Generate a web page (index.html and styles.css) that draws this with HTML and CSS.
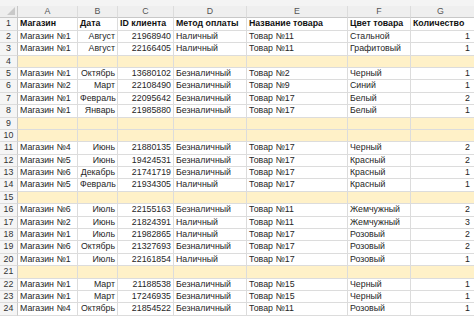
FILE: index.html
```html
<!DOCTYPE html>
<html lang="ru">
<head>
<meta charset="utf-8">
<link rel="stylesheet" href="styles.css">
</head>
<body>
<div class="topstrip"></div>
<div class="sheet">
  <div class="corner"><span class="tri"></span></div>
  <div class="ch">A</div><div class="ch">B</div><div class="ch">C</div><div class="ch">D</div><div class="ch">E</div><div class="ch">F</div><div class="ch">G</div>

  <div class="rh">1</div><div class="c b">Магазин</div><div class="c b">Дата</div><div class="c b">ID клиента</div><div class="c b">Метод оплаты</div><div class="c b">Название товара</div><div class="c b">Цвет товара</div><div class="c b">Количество</div>
  <div class="rh">2</div><div class="c">Магазин №1</div><div class="c r">Август</div><div class="c r">21968940</div><div class="c">Наличный</div><div class="c">Товар №11</div><div class="c">Стальной</div><div class="c r">1</div>
  <div class="rh">3</div><div class="c">Магазин №1</div><div class="c r">Август</div><div class="c r">22166405</div><div class="c">Наличный</div><div class="c">Товар №11</div><div class="c">Графитовый</div><div class="c r">1</div>
  <div class="rh">4</div><div class="c y"></div><div class="c y"></div><div class="c y"></div><div class="c y"></div><div class="c y"></div><div class="c y"></div><div class="c y"></div>
  <div class="rh">5</div><div class="c">Магазин №1</div><div class="c r">Октябрь</div><div class="c r">13680102</div><div class="c">Безналичный</div><div class="c">Товар №2</div><div class="c">Черный</div><div class="c r">1</div>
  <div class="rh">6</div><div class="c">Магазин №2</div><div class="c r">Март</div><div class="c r">22108490</div><div class="c">Безналичный</div><div class="c">Товар №9</div><div class="c">Синий</div><div class="c r">1</div>
  <div class="rh">7</div><div class="c">Магазин №1</div><div class="c r">Февраль</div><div class="c r">22095642</div><div class="c">Безналичный</div><div class="c">Товар №17</div><div class="c">Белый</div><div class="c r">2</div>
  <div class="rh">8</div><div class="c">Магазин №1</div><div class="c r">Январь</div><div class="c r">21985880</div><div class="c">Безналичный</div><div class="c">Товар №17</div><div class="c">Белый</div><div class="c r">1</div>
  <div class="rh">9</div><div class="c y"></div><div class="c y"></div><div class="c y"></div><div class="c y"></div><div class="c y"></div><div class="c y"></div><div class="c y"></div>
  <div class="rh">10</div><div class="c y"></div><div class="c y"></div><div class="c y"></div><div class="c y"></div><div class="c y"></div><div class="c y"></div><div class="c y"></div>
  <div class="rh">11</div><div class="c">Магазин №4</div><div class="c r">Июнь</div><div class="c r">21880135</div><div class="c">Безналичный</div><div class="c">Товар №17</div><div class="c">Черный</div><div class="c r">2</div>
  <div class="rh">12</div><div class="c">Магазин №5</div><div class="c r">Июнь</div><div class="c r">19424531</div><div class="c">Безналичный</div><div class="c">Товар №17</div><div class="c">Красный</div><div class="c r">2</div>
  <div class="rh">13</div><div class="c">Магазин №6</div><div class="c r">Декабрь</div><div class="c r">21741719</div><div class="c">Безналичный</div><div class="c">Товар №17</div><div class="c">Красный</div><div class="c r">1</div>
  <div class="rh">14</div><div class="c">Магазин №5</div><div class="c r">Февраль</div><div class="c r">21934305</div><div class="c">Наличный</div><div class="c">Товар №17</div><div class="c">Красный</div><div class="c r">1</div>
  <div class="rh">15</div><div class="c y"></div><div class="c y"></div><div class="c y"></div><div class="c y"></div><div class="c y"></div><div class="c y"></div><div class="c y"></div>
  <div class="rh">16</div><div class="c">Магазин №6</div><div class="c r">Июль</div><div class="c r">22155163</div><div class="c">Безналичный</div><div class="c">Товар №11</div><div class="c">Жемчужный</div><div class="c r">2</div>
  <div class="rh">17</div><div class="c">Магазин №2</div><div class="c r">Июнь</div><div class="c r">21824391</div><div class="c">Наличный</div><div class="c">Товар №11</div><div class="c">Жемчужный</div><div class="c r">3</div>
  <div class="rh">18</div><div class="c">Магазин №1</div><div class="c r">Июль</div><div class="c r">21982865</div><div class="c">Наличный</div><div class="c">Товар №17</div><div class="c">Розовый</div><div class="c r">2</div>
  <div class="rh">19</div><div class="c">Магазин №6</div><div class="c r">Октябрь</div><div class="c r">21327693</div><div class="c">Безналичный</div><div class="c">Товар №17</div><div class="c">Розовый</div><div class="c r">2</div>
  <div class="rh">20</div><div class="c">Магазин №1</div><div class="c r">Июль</div><div class="c r">22161854</div><div class="c">Наличный</div><div class="c">Товар №17</div><div class="c">Розовый</div><div class="c r">1</div>
  <div class="rh">21</div><div class="c y"></div><div class="c y"></div><div class="c y"></div><div class="c y"></div><div class="c y"></div><div class="c y"></div><div class="c y"></div>
  <div class="rh">22</div><div class="c">Магазин №1</div><div class="c r">Март</div><div class="c r">21188538</div><div class="c">Безналичный</div><div class="c">Товар №15</div><div class="c">Черный</div><div class="c r">1</div>
  <div class="rh">23</div><div class="c">Магазин №1</div><div class="c r">Март</div><div class="c r">17246935</div><div class="c">Безналичный</div><div class="c">Товар №15</div><div class="c">Черный</div><div class="c r">1</div>
  <div class="rh">24</div><div class="c">Магазин №4</div><div class="c r">Октябрь</div><div class="c r">21854522</div><div class="c">Безналичный</div><div class="c">Товар №11</div><div class="c">Розовый</div><div class="c r">1</div>
</div>
</body>
</html>
```
FILE: styles.css
```css
html, body {
  margin: 0;
  padding: 0;
  background: #ffffff;
  overflow: hidden;
  width: 474px;
  height: 316px;
}
body {
  font-family: "Liberation Sans", Arial, sans-serif;
  font-size: 8.8px;
  color: #262626;
}
.topstrip {
  height: 6px;
  background: #f4f4f4;
}
.sheet {
  display: grid;
  grid-template-columns: 18px 60px 40px 56px 73px 101px 63px 70px;
  grid-auto-rows: 12.4px;
  width: 481px;
}
.sheet > div {
  box-sizing: border-box;
  border-right: 1px solid #dcdcdc;
  border-bottom: 1px solid #dcdcdc;
  white-space: nowrap;
  overflow: hidden;
  line-height: 11.4px;
}
.corner {
  background: #eeeeee;
  position: relative;
  border-color: #c8c8c8 !important;
}
.tri {
  position: absolute;
  right: 2px;
  bottom: 2px;
  width: 0;
  height: 0;
  border-left: 8px solid transparent;
  border-bottom: 8px solid #c9c9c9;
}
.ch {
  background: #efefef;
  text-align: center;
  color: #555555;
  border-bottom-color: #c8c8c8 !important;
}
.rh {
  background: #f5f5f5;
  text-align: center;
  color: #333333;
  border-right-color: #c8c8c8 !important;
}
.c {
  padding: 0 2px;
}
.b {
  font-weight: bold;
  color: #111111;
}
.r {
  text-align: right;
}
.y {
  background: #fff1c8;
}
.sheet > div:nth-child(8n) {
  padding-right: 10px;
}
```
